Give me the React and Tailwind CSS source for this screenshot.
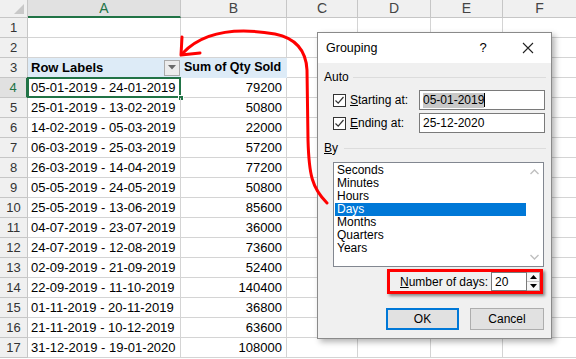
import React from "react";

const rows = [
    ["05-01-2019 - 24-01-2019", "79200"],
    ["25-01-2019 - 13-02-2019", "50800"],
    ["14-02-2019 - 05-03-2019", "22000"],
    ["06-03-2019 - 25-03-2019", "57200"],
    ["26-03-2019 - 14-04-2019", "77200"],
    ["05-05-2019 - 24-05-2019", "50800"],
    ["25-05-2019 - 13-06-2019", "85600"],
    ["04-07-2019 - 23-07-2019", "36000"],
    ["24-07-2019 - 12-08-2019", "73600"],
    ["02-09-2019 - 21-09-2019", "52400"],
    ["22-09-2019 - 11-10-2019", "140400"],
    ["01-11-2019 - 20-11-2019", "36800"],
    ["21-11-2019 - 10-12-2019", "63600"],
    ["31-12-2019 - 19-01-2020", "108000"],
];

const units = ["Seconds", "Minutes", "Hours", "Days", "Months", "Quarters", "Years"];

function RowHead({ n, active }) {
    return (
        <div
            className={
                active
                    ? "w-[28px] shrink-0 flex items-center justify-center border-b border-r-2 border-b-[#c6c6c6] border-r-[#217346] bg-[#e1e1e1] text-[13px] text-[#217346]"
                    : "w-[28px] shrink-0 flex items-center justify-center border-b border-r border-[#c6c6c6] bg-[#f0f0f0] text-[13px] text-[#333]"
            }
        >
            {n}
        </div>
    );
}

function EmptyCells() {
    return (
        <>
            <div className="w-[71px] shrink-0 border-b border-r border-[#d4d4d4]" />
            <div className="w-[73px] shrink-0 border-b border-r border-[#d4d4d4]" />
            <div className="w-[72px] shrink-0 border-b border-r border-[#d4d4d4]" />
            <div className="w-[73px] shrink-0 border-b border-[#d4d4d4]" />
        </>
    );
}

function Check() {
    return (
        <div className="w-[13px] h-[13px] shrink-0 border border-[#333] bg-white flex items-center justify-center">
            <svg width="11" height="11" viewBox="0 0 11 11">
                <path d="M1.5 5.5 L4.2 8.2 L9.5 2" fill="none" stroke="#333" strokeWidth="1.2" />
            </svg>
        </div>
    );
}

function Sheet() {
    return (
        <div className="flex flex-col">
            <div className="flex h-[18px]">
                <div className="w-[28px] shrink-0 border-b border-r border-[#c6c6c6] bg-[#f0f0f0] relative">
                    <svg className="absolute right-[3px] bottom-[3px]" width="10" height="10" viewBox="0 0 10 10">
                        <path d="M10 0 L10 10 L0 10 Z" fill="#c8c8c8" />
                    </svg>
                </div>
                <div className="w-[153px] shrink-0 border-b-2 border-r border-b-[#217346] border-r-[#c6c6c6] bg-[#e1e1e1] flex items-center justify-center text-[14px] text-[#217346]">A</div>
                <div className="w-[106px] shrink-0 border-b border-r border-[#c6c6c6] bg-[#f0f0f0] flex items-center justify-center text-[14px] text-[#444]">B</div>
                <div className="w-[71px] shrink-0 border-b border-r border-[#c6c6c6] bg-[#f0f0f0] flex items-center justify-center text-[14px] text-[#444]">C</div>
                <div className="w-[73px] shrink-0 border-b border-r border-[#c6c6c6] bg-[#f0f0f0] flex items-center justify-center text-[14px] text-[#444]">D</div>
                <div className="w-[72px] shrink-0 border-b border-r border-[#c6c6c6] bg-[#f0f0f0] flex items-center justify-center text-[14px] text-[#444]">E</div>
                <div className="w-[73px] shrink-0 border-b border-[#c6c6c6] bg-[#f0f0f0] flex items-center justify-center text-[14px] text-[#444]">F</div>
            </div>

            {[1, 2].map((n) => (
                <div key={n} className="flex h-[20px]">
                    <RowHead n={n} />
                    <div className="w-[153px] shrink-0 border-b border-r border-[#d4d4d4]" />
                    <div className="w-[106px] shrink-0 border-b border-r border-[#d4d4d4]" />
                    <EmptyCells />
                </div>
            ))}

            <div className="flex h-[20px]">
                <RowHead n={3} />
                <div className="w-[153px] shrink-0 border-b border-[#ddebf7] bg-[#ddebf7] flex items-center justify-between pl-[3px] pr-[1px] font-bold text-[13px] text-black">
                    <span>Row Labels</span>
                    <div className="w-[16px] h-[16px] border border-[#ababab] bg-[#ececec] flex items-center justify-center">
                        <svg width="8" height="5" viewBox="0 0 8 5">
                            <path d="M0 0 L8 0 L4 4.5 Z" fill="#6a6a6a" />
                        </svg>
                    </div>
                </div>
                <div className="w-[106px] shrink-0 border-b border-r border-[#ddebf7] bg-[#ddebf7] flex items-center pl-[3px] font-bold text-[12.5px] text-black whitespace-nowrap">
                    Sum of Qty Sold
                </div>
                <EmptyCells />
            </div>

            {rows.map(([label, qty], i) => (
                <div key={label} className="flex h-[20px]">
                    <RowHead n={i + 4} active={i === 0} />
                    <div className="w-[153px] shrink-0 border-b border-r border-[#d4d4d4] flex items-center pl-[3px] text-[13px] text-black relative whitespace-nowrap">
                        {label}
                        {i === 0 && (
                            <>
                                <div className="absolute left-[-1px] top-[-1px] right-[-1px] bottom-[-1px] border-2 border-[#217346]" />
                                <div className="absolute right-[-4px] bottom-[-4px] w-[6px] h-[6px] bg-[#217346] border border-white" />
                            </>
                        )}
                    </div>
                    <div className="w-[106px] shrink-0 border-b border-r border-[#d4d4d4] flex items-center justify-end pr-[4px] text-[13px] text-black">
                        {qty}
                    </div>
                    <EmptyCells />
                </div>
            ))}
        </div>
    );
}

function Dialog() {
    return (
        <div className="absolute left-[317px] top-[32px] w-[235px] h-[307px] border border-[#8a8a8a] bg-[#f0f0f0] shadow-[3px_3px_6px_rgba(0,0,0,0.3)] flex flex-col text-[12px] text-black">
            <div className="h-[30px] bg-white flex items-center">
                <span className="ml-[8px] text-[12.5px]">Grouping</span>
                <div className="flex-1" />
                <div className="w-[30px] flex justify-center text-[13px]">?</div>
                <div className="w-[30px] ml-[15px] mr-[8px] flex justify-center">
                    <svg width="12" height="12" viewBox="0 0 12 12">
                        <path d="M1 1 L11 11 M11 1 L1 11" stroke="#222" strokeWidth="1.1" />
                    </svg>
                </div>
            </div>

            <div className="flex items-center h-[14px] mt-[7px] pl-[6px] pr-[5px]">
                <span>Auto</span>
                <div className="flex-1 h-px bg-[#dcdcdc] ml-[4px]" />
            </div>

            <div className="flex items-center h-[20px] mt-[6px] pl-[15px] pr-[6px]">
                <Check />
                <span className="ml-[4px]"><u>S</u>tarting at:</span>
                <div className="ml-auto w-[126px] h-[20px] border border-[#7a7a7a] bg-white flex items-center pl-[3px]">
                    <span className="bg-[#c8c8c8] leading-[15px]">05-01-2019</span>
                    <span className="w-px h-[14px] bg-black" />
                </div>
            </div>

            <div className="flex items-center h-[20px] mt-[3px] pl-[15px] pr-[6px]">
                <Check />
                <span className="ml-[4px]"><u>E</u>nding at:</span>
                <div className="ml-auto w-[126px] h-[20px] border border-[#7a7a7a] bg-white flex items-center pl-[3px]">
                    25-12-2020
                </div>
            </div>

            <div className="flex items-center h-[14px] mt-[8px] pl-[6px] pr-[5px]">
                <span><u>B</u>y</span>
                <div className="flex-1 h-px bg-[#dcdcdc] ml-[6px]" />
            </div>

            <div className="ml-[15px] mt-[7px] w-[211px] h-[105px] border border-[#828790] bg-white flex">
                <div className="flex-1 pt-px pl-px">
                    {units.map((u) => (
                        <div
                            key={u}
                            className={
                                u === "Days"
                                    ? "h-[13px] leading-[13px] pl-[2px] bg-[#0078d7] text-white"
                                    : "h-[13px] leading-[13px] pl-[2px]"
                            }
                        >
                            {u}
                        </div>
                    ))}
                </div>
                <div className="w-[17px] flex flex-col justify-between items-center py-[6px]">
                    <svg width="9" height="6" viewBox="0 0 9 6">
                        <path d="M0.5 5 L4.5 1 L8.5 5" fill="none" stroke="#bfbfbf" strokeWidth="1.4" />
                    </svg>
                    <svg width="9" height="6" viewBox="0 0 9 6">
                        <path d="M0.5 1 L4.5 5 L8.5 1" fill="none" stroke="#bfbfbf" strokeWidth="1.4" />
                    </svg>
                </div>
            </div>

            <div className="ml-[69px] mt-[2px] w-[156px] h-[25px] border-[3px] border-[#ff0000] shadow-[2px_2px_3px_rgba(0,0,0,0.45)] flex items-center pl-[10px]">
                <span><u>N</u>umber of days:</span>
                <div className="ml-auto flex h-full">
                    <div className="w-[36px] h-full border border-[#7a7a7a] bg-white flex items-center pl-[3px]">20</div>
                    <div className="w-[13px] h-full border-y border-r border-[#acacac] bg-[#f7f7f7] flex flex-col">
                        <div className="flex-1 flex items-center justify-center border-b border-[#c8c8c8]">
                            <svg width="7" height="4" viewBox="0 0 7 4"><path d="M0 4 L3.5 0 L7 4 Z" fill="#000" /></svg>
                        </div>
                        <div className="flex-1 flex items-center justify-center">
                            <svg width="7" height="4" viewBox="0 0 7 4"><path d="M0 0 L7 0 L3.5 4 Z" fill="#000" /></svg>
                        </div>
                    </div>
                </div>
            </div>

            <div className="flex mt-[14px] ml-[68px] gap-[11px]">
                <button className="w-[73px] h-[22px] border-2 border-[#0078d7] bg-[#e1e1e1] flex items-center justify-center">OK</button>
                <button className="w-[74px] h-[22px] border border-[#adadad] bg-[#e1e1e1] flex items-center justify-center">Cancel</button>
            </div>
        </div>
    );
}

export default function App() {
    return (
        <div className="relative w-[576px] h-[359px] overflow-hidden bg-white font-['Liberation_Sans',Arial,sans-serif]">
            <Sheet />
            <Dialog />
            <svg className="absolute left-0 top-0 pointer-events-none" width="576" height="359" viewBox="0 0 576 359">
                <path
                    d="M183 53 C205 30, 240 28, 275 34 C295 38, 306 50, 307 70 L308 140 C309 175, 312 188, 327 203"
                    fill="none"
                    stroke="#ff0000"
                    strokeWidth="3"
                    strokeLinecap="round"
                />
                <path d="M182 37 L181 55 L200 53" fill="none" stroke="#ff0000" strokeWidth="3" strokeLinecap="round" strokeLinejoin="round" />
            </svg>
        </div>
    );
}
